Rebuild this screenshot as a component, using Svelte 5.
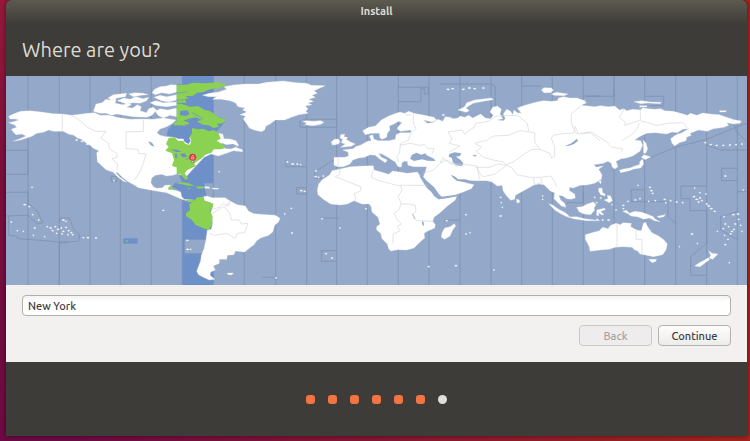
<script>
	let city = 'New York';

	const steps = 7;
	const currentStep = 6;

	// MAP DATA
	// The map is split in five sheets, points are local to their sheet
	const sheets = { pacific: 0, america: 450, europe: 930, asia: 1320, oceania: 1740 };

	function on(sheet, points) {
		return points
			.trim()
			.split(/\s+/)
			.map((p) => {
				const [x, y] = p.split(',').map(Number);
				return `${x + sheets[sheet]},${y}`;
			})
			.join(' ');
	}

	const meridians = [
		84, 178, 270, 361, 454, 547, 640, 733, 827, 920, 1010, 1102, 1195, 1287, 1380, 1473, 1565,
		1657, 1750, 1842, 1934, 2027, 2120, 2212
	];

	const zoneLines = [
		on('pacific', '18,241 84,241 84,313 18,313'),
		on('pacific', '18,367 84,367 84,400 112,424 129,458 112,462 84,436 18,438'),
		on('pacific', '26,438 26,496 50,498 52,506 110,510 178,516 235,514 239,493 222,480 208,444 182,444 178,458'),
		on('pacific', '178,645 178,520 205,518'),
		on('pacific', '334,319 350,319 350,334 334,334 334,319'),
		on('america', '460,148 560,148'),
		on('america', '450,150 450,172 560,172'),
		on('america', '408,270 408,290 470,290'),
		on('america', '470,353 440,353 440,372 470,372'),
		on('america', '565,444 512,444'),
		on('america', '558,542 514,542 514,574 558,574'),
		on('america', '338,622 372,622 382,630'),
		on('america', '560,265 495,305 495,325 520,325'),
		on('europe', '265,52 355,52 355,72 343,72 343,55 333,55 333,95 265,95'),
		on('europe', '448,450 404,450 404,458'),
		on('asia', '0,42 153,42 166,48 166,112'),
		on('asia', '245,48 305,48'),
		on('asia', '430,78 480,78'),
		on('asia', '380,398 430,398 430,365'),
		on('oceania', '20,79 102,79 102,18'),
		on('oceania', '194,79 251,79 251,107 210,107'),
		on('oceania', '194,270 285,232 380,208 472,170 500,160'),
		on('oceania', '462,165 470,185 500,215'),
		on('oceania', '380,225 420,240 500,240'),
		on('oceania', '472,295 425,295 425,332 472,332'),
		on('oceania', '194,359 154,359 154,395 264,395 264,440 287,460'),
		on('oceania', '380,348 303,348 303,386 330,386 330,422 380,422 380,520 332,560 332,616 380,616'),
		on('oceania', '472,365 500,365'),
		on('oceania', '472,425 422,440 422,480 472,508')
	];

	const land = [
		// north america
		on('pacific', `26,139 45,130 62,124 90,122 130,127 160,131 187,132 215,136 240,133 262,130 285,128 300,136 330,136
			350,142 390,148 430,147 460,148 490,144 528,150 518,160 500,170 480,177 471,188 480,196 498,200 560,205
			655,190 668,192 672,206 690,207 708,212 716,226 706,232 727,239 728,245 700,242 690,246 655,258 633,252
			612,262 560,318 530,312 518,316 500,318 485,313 466,316 455,324 453,338 460,350 470,355 488,353 494,346
			512,345 504,358 525,361 542,366 545,380 553,388 580,390 570,395 545,388 528,380 500,368 455,361 415,353
			404,346 382,334 366,321 352,307 347,308 360,322 380,336 370,334 350,318 340,307 318,299 306,288 292,275
			290,248 297,243 280,235 270,226 262,222 244,208 232,204 222,196 205,192 190,184 160,184 146,180 130,187
			110,190 96,199 80,204 62,210 40,213 60,206 78,198 66,192 48,194 38,184 34,178 50,172 44,165 26,158 40,155
			56,150 46,147 30,147`),
		on('pacific', `280,124 288,102 306,98 318,88 330,90 348,84 346,100 370,104 384,98 394,104 380,112 398,114 412,104
			424,110 420,122 440,128 446,116 460,112 470,120 456,136 440,142 400,140 372,136 350,132 336,136 318,130 300,130`),
		on('pacific', '324,84 340,74 358,72 380,70 376,80 352,84 334,90'),
		on('pacific', '352,92 372,84 390,88 408,80 430,86 446,82 440,92 420,100 400,98 380,102'),
		on('pacific', '386,72 404,68 430,70 444,74 424,76 400,80'),
		on('pacific', '456,68 464,58 480,50 500,48 512,44 530,45 530,66 508,72 486,68 466,74'),
		on('pacific', '462,82 480,76 500,80 530,74 530,90 506,96 484,92'),
		on('pacific', '450,98 468,92 490,98 530,96 530,106 500,110 480,108 466,106'),
		on('pacific', '466,124 480,116 504,120 530,114 530,140 510,136 490,144 474,136'),
		// caribbean
		on('america', '163,350 176,350 180,355 165,355'),
		on('america', '186,354 206,355 204,358 188,357'),
		// south america
		on('america', `160,380 172,378 186,383 225,383 242,394 262,404 286,408 296,424 312,431 350,434 376,436 390,445
			386,456 374,466 368,486 356,496 332,504 320,512 312,524 296,536 284,546 256,543 252,554 232,556 230,568
			208,568 208,580 190,588 196,600 182,606 180,616 194,628 178,630 160,622 146,614 140,604 146,588 152,572
			154,556 162,536 168,508 172,480 184,478 188,460 182,430 190,402 164,392`),
		on('america', '232,609 250,609 246,614 234,614'),
		// greenland
		on('america', `158,76 178,70 206,66 230,58 222,50 250,45 284,42 326,42 350,37 400,33 440,38 470,40 484,46 526,47
			510,54 492,62 502,70 486,76 496,82 476,88 490,94 474,100 486,104 466,108 474,116 468,124 474,130 446,134
			424,142 404,150 376,150 360,162 348,168 344,180 334,185 312,180 298,174 288,158 280,148 286,138 270,134
			290,126 278,120 284,114 264,110 256,98 240,92 214,88 188,88 200,80 176,80`),
		on('america', '458,154 470,152 490,154 512,152 522,157 512,163 490,167 464,164 470,160'),
		// british isles
		on('europe', '92,194 104,192 102,200 112,202 110,209 122,216 136,222 124,229 92,232 106,222 94,218 98,208 90,204'),
		on('europe', '65,216 72,208 84,207 90,213 86,222 66,225'),
		// africa
		on('europe', `90,297 120,290 160,288 190,287 192,300 214,306 236,313 248,303 270,306 292,310 322,306 330,318 338,330
			348,350 362,364 374,380 386,388 412,384 440,378 436,390 410,410 390,428 372,442 368,454 376,464 374,474
			352,484 342,490 344,504 330,516 312,534 290,540 262,539 242,543 236,536 232,522 216,506 212,490 200,480
			200,470 210,462 204,442 186,426 184,412 178,402 156,402 132,392 112,402 90,405 62,402 40,388 24,374 22,360
			26,342 38,328 58,316 66,302`),
		on('europe', '433,461 437,468 428,480 420,498 404,508 394,502 396,488 404,474 420,470'),
		// arctic russia
		on('asia', '54,120 74,110 80,98 104,90 154,84 160,89 130,94 100,100 86,108 78,114 88,122 78,127'),
		on('asia', '304,60 312,53 334,54 340,61 332,68 312,68'),
		on('asia', '334,72 350,67 384,72 372,77 342,76'),
		on('oceania', '162,95 186,92 210,96 244,97 240,101 204,99 182,101'),
		on('oceania', '178,107 200,107 200,111 180,111'),
		on('oceania', '418,122 440,122 436,126 420,126'),
		on('oceania', '0,88 16,92 12,100 0,100'),
		// south asia islands
		on('asia', '229,387 238,390 239,397 231,399'),
		on('asia', '326,401 338,405 356,418 376,428 390,440 380,440 360,430 344,420'),
		on('asia', '384,441 410,440 434,446 460,449 480,452 440,452 400,446'),
		on('asia', '410,412 426,410 442,402 460,396 468,404 462,414 464,420 452,434 432,432 418,426'),
		on('oceania', '50,420 74,415 76,419 62,424 72,434 64,434 56,428 56,438 50,436'),
		on('oceania', '56,355 66,354 68,368 76,372 74,378 62,374 56,364'),
		on('oceania', '72,390 84,386 82,376 92,378 97,392 88,398'),
		on('oceania', '56,334 64,332 62,342'),
		on('oceania', `128,424 140,421 148,430 164,424 186,427 206,434 220,440 226,448 240,455 224,452 208,444 192,448
			172,440 152,438 146,432`),
		on('oceania', '232,439 252,435 256,431 252,440 236,443'),
		// japan and sakhalin
		on('oceania', '118,301 130,297 150,294 164,288 178,284 180,274 188,268 191,282 182,294 162,297 148,302 122,308'),
		on('oceania', '184,262 192,254 212,261 196,269'),
		on('oceania', '190,210 198,220 203,236 197,250 191,250'),
		// australia and new zealand
		on('oceania', `16,494 36,488 58,482 68,472 84,476 92,466 108,460 122,464 128,458 154,460 152,470 170,480 184,482
			190,460 196,456 204,472 216,488 236,498 252,510 262,522 258,540 248,554 220,560 196,555 180,552 172,542
			164,540 156,532 130,530 106,532 88,538 60,540 30,544 28,530 16,508`),
		on('oceania', '206,568 230,568 226,575 216,578'),
		on('oceania', '386,542 396,550 414,552 406,560 398,568 388,564 392,556'),
		on('oceania', '344,588 358,578 374,570 384,563 390,568 374,580 360,590'),
		// europe and asia
		[
			on('europe', `72,262 104,262 116,258 114,246 98,240 116,238 130,236 136,230 154,224 172,214 184,212 178,198
				188,194 192,208 206,212 236,212 256,208 258,194 270,188 302,188 304,180 272,184 262,178 264,170 276,158
				266,154 252,162 238,168 240,180 232,190 230,202 216,208 210,204 208,190 184,190 166,194 158,182 176,172
				196,168 214,150 236,138 252,132 270,126 284,130 296,124 312,130 344,136 372,142 380,150 366,156 340,150
				352,160 368,158 384,148 398,154 406,140 420,142 430,146 444,144`),
			on('asia', `60,138 74,142 86,136 98,144 122,132 136,144 152,146 160,136 150,126 158,112 172,108 184,118 180,132
				188,146 172,150 190,152 196,146 190,132 200,118 212,124 218,134 222,120 232,128 244,130 232,114 248,108
				268,102 290,96 310,92 334,94 352,92 356,84 370,80 390,84 412,84 432,94 440,98 424,106 444,108`),
			on('oceania', `44,110 62,107 86,110 104,108 118,120 132,116 140,122 158,118 182,120 188,113 206,116 224,118
				242,116 254,122 280,124 302,130 322,136 332,130 350,136 368,129 390,132 418,134 440,142 462,149 484,153
				480,160 460,162 440,158 446,166 432,172 400,176 382,184 356,180 340,186 330,190 334,196 320,202 318,212
				298,218 284,228 276,220 272,206 288,194 306,188 326,176 308,178 292,188 276,186 260,192 226,188 200,190
				178,200 164,210 182,212 188,226 180,244 158,258 140,264 124,266 108,274 114,290 104,297 96,290 94,280
				84,274 70,280 42,284 48,292 70,288 56,298 66,314 64,328 44,340 20,345 0,346`),
			on('asia', `410,350 400,354 388,352 388,362 404,372 406,384 392,388 380,386 368,378 356,376 362,390 374,400
				378,412 364,408 348,392 342,386 344,368 332,364 322,354 312,344 296,342 280,346 262,356 240,368 226,376
				224,388 212,391 200,378 190,364 186,346 172,348 156,336 140,332 104,332 74,330 76,338 102,344 94,356
				70,366 30,380 4,382`),
			on('europe', `386,372 370,350 350,332 340,320 346,306 350,290 336,290 312,290 294,286 292,274 282,274 276,278
				274,291 264,290 256,276 246,270 234,262 216,252 206,250 214,262 232,270 226,278 208,266 196,256 180,254
				164,262 146,264 128,270 120,282 100,290 84,290 72,286`)
		].join(' ')
	];

	const water = [
		on('europe', '300,266 306,254 320,248 334,254 346,250 350,256 372,266 376,273 352,272 336,268 312,273'),
		on('europe', '328,318 336,320 350,334 372,352 388,374 396,380 440,374 440,379 412,384 386,388 368,368 348,350'),
		on('europe', '306,430 310,434 316,446 312,446'),
		on('europe', '336,452 341,456 342,468 337,464'),
		on('asia', '28,252 44,247 64,250 60,258 48,260 62,270 70,280 66,288 48,286 38,276 36,264 26,260'),
		on('asia', '32,314 46,320 54,328 76,328 88,332 74,337 50,332 40,324'),
		on('asia', '96,254 110,256 106,260'),
		on('asia', '374,228 390,222 402,214 410,206 414,212 402,222 388,227'),
		on('pacific', '444,214 456,218 464,230 452,226'),
		on('europe', '246,275 252,280 260,292 252,290'),
		// gulf of saint lawrence
		on('america', '214,218 228,224 250,222 262,228 246,236 228,236 216,226')
	];

	const selectedLand = [
		on('america', `80,44 110,44 128,38 168,40 200,37 226,42 228,47 206,54 180,58 160,66 142,68 128,78 106,78 116,84
			104,88 110,98 80,98`),
		on('america', `80,98 98,102 120,110 144,108 164,120 178,122 196,134 206,142 230,150 218,160 200,162 208,170
			190,174 176,166 158,164 140,154 156,150 138,142 116,146 100,152 118,158 114,164 96,162 80,158`),
		on('america', '72,158 84,152 100,160 110,168 88,166 72,166'),
		on('america', `126,174 144,178 160,176 176,184 192,180 206,190 212,206 200,212 216,222 226,234 212,238 192,238
			184,248 166,254 156,264 144,272 132,280 138,288 112,300 104,310 114,324 108,330 98,320 92,312 80,314 80,292
			66,288 72,270 66,250 46,242 56,230 48,222 56,204 74,202 84,212 100,212 106,222 120,224 124,210 118,202 126,190`),
		on('america', '54,354 66,344 68,356 58,360'),
		on('america', '80,341 96,337 116,340 134,347 114,347 96,343'),
		on('america', '136,350 158,349 164,355 144,356'),
		on('america', '112,353 124,355 116,357'),
		on('america', `94,388 110,390 124,388 132,392 142,382 160,380 162,392 178,396 190,402 188,412 180,420 188,440
			186,464 176,480 158,474 136,464 126,450 108,438 108,430 120,420 118,402 126,398 110,392`)
	];

	const selectedWater = [
		on('america', '96,172 124,170 126,188 116,200 122,212 116,222 104,216 100,206 84,206 68,198 54,196 58,180 70,168'),
		on('america', '62,238 84,240 94,246 78,246'),
		on('america', '74,252 80,250 82,264 76,264'),
		on('america', '90,252 104,250 112,260 98,262'),
		on('america', '90,124 112,120 118,132 108,138 90,136'),
		on('america', '104,268 118,264 116,268')
	];

	const borders = [
		on('pacific', '187,132 187,184'),
		on('pacific', '215,136 240,152 262,172 286,184 318,184 302,204 326,220 328,236 350,250 352,262 336,266 352,282 352,300'),
		on('pacific', '430,148 430,185 378,185 378,236 414,238 416,250 438,252 430,280 420,304 404,330'),
		on('america', '184,418 210,412 220,400 236,408 240,394'),
		on('america', '186,430 222,410 240,430 244,450 268,450 274,462 294,460 284,488 262,490 256,506 230,490 192,496 178,490'),
		on('america', '235,396 226,412'),
		on('europe', '90,297 88,314 76,320 152,350 152,362 132,372 138,386 132,394'),
		on('europe', '190,300 184,322 206,332 262,346 352,346'),
		on('europe', '272,346 276,360 264,380 274,400 266,420 252,430 262,450 274,462 262,470 270,482 250,492 248,520'),
		on('europe', '272,402 296,402 316,406 318,424 306,434 320,452 370,454'),
		on('europe', '310,130 310,160 318,176 300,194 296,210 272,220 268,250 260,262 266,276'),
		on('europe', '268,226 300,220 330,226 344,224 350,234 372,236 366,252'),
		on('europe', '285,130 290,136 304,134'),
		on('europe', '340,310 370,300 390,280 400,262'),
		on('europe', '390,278 410,270 422,276 440,290'),
		on('europe', '84,262 84,288'),
		on('asia', '60,228 28,220 36,206 24,186 66,180 74,192 104,170 106,160 144,154 170,138 232,136 262,160 266,184'),
		on('asia', '104,220 126,214 140,212 160,198 206,196 240,182 284,188 284,216 300,238 330,250 334,264 344,260 344,232 334,204 340,196 374,190'),
		on('asia', '60,228 28,246'),
		on('asia', '104,220 124,232 108,244 130,262 160,270 190,276 198,284 220,276 252,252 276,238 300,238'),
		on('asia', '480,212 450,188 420,192 408,190 394,160 394,132 424,106'),
		on('asia', '374,190 400,190 406,170 414,190'),
		on('asia', '108,292 150,292 172,282 200,286 166,312 132,320 124,316 108,292'),
		on('asia', '200,286 216,294 230,314 270,322 300,322 332,318 342,332 350,350'),
		on('asia', '280,322 284,344 306,338 302,324'),
		on('asia', '8,262 28,280 78,284 112,288 118,328'),
		on('oceania', '0,190 34,186 56,200 80,216 96,232 128,236 124,248'),
		on('oceania', '132,118 118,142 136,156 134,166 182,150 180,112'),
		on('oceania', '182,152 230,166 262,160 310,158 322,174'),
		on('oceania', '126,212 160,190 172,176 178,160'),
		on('oceania', '111,461 111,531'),
		on('oceania', '168,480 168,508 186,508 186,554')
	];

	// x, y, width
	const islands = [
		[96, 352, 5], [74, 404, 8], [88, 410, 5], [98, 434, 5], [116, 450, 5], [34, 456, 5], [52, 482, 4],
		[70, 484, 4], [104, 474, 6], [100, 496, 4], [134, 500, 4], [142, 470, 5], [152, 474, 7], [158, 482, 6],
		[166, 470, 6], [174, 478, 8], [184, 474, 5], [190, 484, 6], [198, 472, 6], [206, 482, 5], [214, 488, 6],
		[190, 450, 8], [198, 454, 5], [170, 490, 5], [186, 492, 5], [204, 494, 5], [218, 494, 5], [250, 503, 5],
		[264, 503, 8], [288, 504, 6], [230, 210, 7], [246, 214, 8], [262, 222, 8], [342, 332, 4], [490, 421, 6],
		[562, 511, 7], [563, 538, 9], [657, 305, 4], [572, 538, 4], [862, 276, 6], [878, 282, 9], [892, 282, 6],
		[902, 284, 4], [904, 362, 8], [914, 364, 6], [874, 415, 5], [854, 432, 4], [876, 489, 6], [828, 624, 5],
		[948, 303, 6], [947, 320, 8], [956, 322, 5], [970, 318, 5], [966, 446, 5], [1020, 474, 4], [978, 551, 6],
		[996, 564, 6], [1098, 416, 5], [998, 216, 8], [1010, 212, 8], [1006, 222, 6], [1340, 452, 6],
		[1398, 434, 5], [1398, 492, 5], [1410, 488, 4], [1286, 590, 6], [1368, 587, 8], [1482, 600, 4],
		[1502, 382, 5], [1504, 398, 4], [1507, 412, 4], [1502, 438, 7], [1628, 378, 4], [1628, 388, 4],
		[1344, 58, 9], [1358, 56, 7], [1390, 58, 9], [1408, 54, 9], [1424, 56, 7], [1450, 54, 7], [1330, 135, 8],
		[1784, 382, 5], [1790, 398, 5], [1802, 384, 5], [1836, 404, 4], [1870, 406, 7], [1884, 394, 5],
		[1870, 416, 5], [1848, 420, 4], [1826, 450, 8], [1808, 450, 6], [1792, 448, 6], [1914, 346, 5],
		[1950, 352, 7], [1954, 362, 8], [1958, 370, 6], [1906, 390, 6], [1920, 386, 5], [1946, 394, 5],
		[1966, 392, 5], [1994, 388, 7], [1998, 398, 5], [2012, 392, 5], [2030, 396, 6], [2048, 398, 5],
		[2082, 380, 7], [2090, 388, 8], [2100, 384, 6], [2096, 396, 6], [2106, 392, 5], [2100, 368, 5],
		[2084, 354, 4], [2118, 372, 4], [2126, 408, 8], [2134, 416, 8], [2144, 424, 7], [2120, 402, 5],
		[2116, 218, 6], [2132, 224, 7], [2150, 226, 7], [2170, 226, 6], [2190, 225, 7], [2208, 224, 6],
		[2226, 222, 5], [2176, 318, 7], [2230, 360, 4], [2076, 492, 8], [2092, 520, 4], [2038, 530, 3],
		[2188, 578, 4], [2176, 524, 6], [2172, 440, 5], [2176, 462, 6], [2170, 476, 5], [2186, 470, 5],
		[2196, 484, 7], [2202, 478, 6], [2192, 492, 6], [2206, 462, 6], [2200, 434, 8], [2214, 432, 8],
		[2222, 466, 5], [2216, 448, 5], [2174, 496, 4], [2152, 484, 4], [2226, 484, 4], [2184, 508, 5]
	];

	function goBack() {
		city = '';
	}
</script>

<div class="window">
	<div class="titlebar">Install</div>
	<h1>Where are you?</h1>

	<svg class="map" viewBox="18 18 2223 627" role="img" aria-label="Time zone map">
		<rect x="18" y="18" width="2223" height="627" class="sea" />
		<g class="zones">
			{#each meridians as x}
				<line x1={x} x2={x} y1="18" y2="645" />
			{/each}
			{#each zoneLines as points}
				<polyline {points} />
			{/each}
		</g>

		<!-- highlighted zone -->
		<polygon
			class="zone"
			points="547,18 640,18 640,135 680,150 652,182 640,188 640,340 613,340 620,385 640,385 640,645 547,645 547,388 540,362 515,350 526,338 547,338 530,300 530,206 500,196 504,178 530,150 530,42 547,42"
		/>
		<rect class="zone" x="370" y="505" width="43" height="16" />
		<rect class="sea outlined" x="553" y="508" width="65" height="43" />

		<g class="land">
			{#each land as points}
				<polygon {points} />
			{/each}
			{#each islands as [x, y, w]}
				<ellipse cx={x} cy={y} rx={w / 2} ry="2" />
			{/each}
		</g>
		<g class="sea">
			{#each water as points}
				<polygon {points} />
			{/each}
		</g>
		<g class="borders">
			{#each borders as points}
				<polyline {points} />
			{/each}
		</g>
		<g class="selected">
			{#each selectedLand as points}
				<polygon {points} />
			{/each}
			<ellipse cx="381" cy="513" rx="4" ry="2" />
		</g>
		<g class="zone">
			{#each selectedWater as points}
				<polygon {points} />
			{/each}
			<path class="straits" d="M530 68h20l12 -3M530 90h22M530 100l24 2M576 128l34 18" />
		</g>

		<!-- pin -->
		<ellipse cx="579" cy="276" rx="6" ry="3" fill="#66824f" opacity="0.7" />
		<path d="M578 278l-5 -9h10z" fill="#e8d9cf" />
		<circle cx="578" cy="262" r="10" fill="#dc2f2f" stroke="#b9544a" stroke-width="2" />
		<path d="M578 255l-4 7v5h8v-5zM575 263h6" fill="none" stroke="#ffd6d0" stroke-width="2" />
	</svg>

	<form class="panel" on:submit|preventDefault>
		<input type="text" aria-label="City" bind:value={city} />
		<div class="buttons">
			<button type="button" disabled on:click={goBack}>Back</button>
			<button type="submit">Continue</button>
		</div>
	</form>

	<div class="steps">
		{#each Array(steps) as _, i}
			<span class="dot" class:current={i === currentStep}></span>
		{/each}
	</div>
</div>

<style>
	:global(body) {
		margin: 0;
		background: linear-gradient(to right, rgba(160, 32, 28, 0) 10%, #a3241d), linear-gradient(#96183a, #7a0f3c 40%, #6c0a43);
		font-family: Ubuntu, 'Noto Sans', sans-serif;
	}

	.window {
		box-sizing: border-box;
		display: flex;
		flex-direction: column;
		min-height: calc(100vh - 5px);
		margin: 0 3px 5px 6px;
		background: #3d3c38;
		border-radius: 6px 6px 0 0;
		overflow: hidden;
		box-shadow: 0 0 4px rgba(0, 0, 0, 0.5);
	}

	.titlebar {
		height: 24px;
		line-height: 23px;
		background: linear-gradient(#5d5a50, #3d3c38);
		color: #dfdbd2;
		font-size: 11px;
		font-weight: bold;
		text-align: center;
	}

	h1 {
		margin: 0;
		padding: 12px 16px;
		color: #dfdbd2;
		font-size: 20px;
		font-weight: normal;
		line-height: 28px;
	}

	.map {
		display: block;
		width: 100%;
		height: auto;
	}

	.sea {
		fill: #94a8c9;
	}

	.outlined {
		stroke: #7f92b4;
		stroke-width: 2;
	}

	.zones,
	.borders {
		fill: none;
		stroke: #7c8dab;
		stroke-width: 2;
	}

	.borders {
		stroke: #d3d8d8;
	}

	.zone {
		fill: #6d90c9;
	}

	.land {
		fill: #fff;
		stroke: #e6ecee;
		stroke-width: 1;
	}

	.selected {
		fill: #8bd152;
	}

	.straits {
		fill: none;
		stroke: #6d90c9;
		stroke-width: 2;
	}

	.panel {
		display: flex;
		flex-direction: column;
		gap: 9px;
		padding: 10px 16px 16px;
		background: #f2f1f0;
	}

	input {
		box-sizing: border-box;
		width: 100%;
		height: 21px;
		padding: 0 5px;
		border: 1px solid #b3afaa;
		border-radius: 4px;
		background: linear-gradient(#f4f4f4, #fff 6px);
		color: #3c3c3c;
		font-family: inherit;
		font-size: 11px;
		font-weight: 500;
	}

	.buttons {
		display: flex;
		justify-content: flex-end;
		gap: 6px;
	}

	button {
		box-sizing: border-box;
		width: 73px;
		height: 21px;
		padding: 0;
		border: 1px solid #b5b1ac;
		border-radius: 4px;
		background: linear-gradient(#fdfdfd, #ececeb);
		color: #3c3c3c;
		font-family: inherit;
		font-size: 11px;
		font-weight: 500;
	}

	button:disabled {
		border-color: #cbc8c6;
		background: #eeecec;
		color: #a5a3a1;
	}

	.steps {
		display: flex;
		flex: 1;
		align-items: center;
		justify-content: center;
		gap: 13px;
		min-height: 64px;
	}

	.dot {
		width: 9px;
		height: 9px;
		border-radius: 3px;
		background: #f37443;
	}

	.current {
		border-radius: 50%;
		background: #e0dfdd;
	}
</style>
